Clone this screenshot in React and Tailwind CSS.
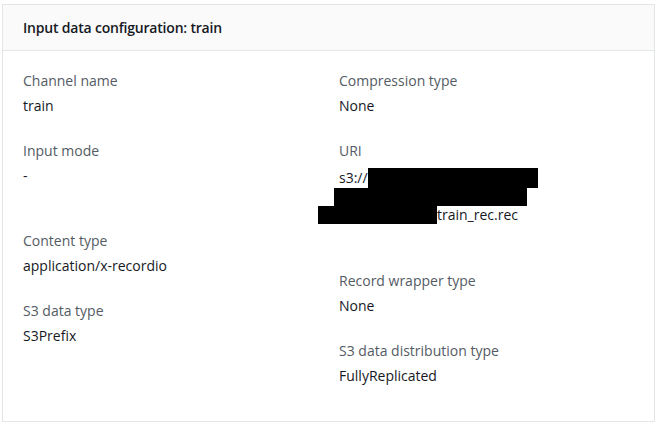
import React from "react";

function Field({ label, children, className = "" }) {
  return (
    <div className={className}>
      <div className="text-[14px] leading-[20px] text-[#545b64]">{label}</div>
      <div className="mt-[5px] text-[14px] leading-[20px] text-[#16191f]">{children}</div>
    </div>
  );
}

export default function App() {
  return (
    <div className="w-[655px] h-[424px] bg-white pt-[4px] pl-[2px]" style={{ fontFamily: "'Open Sans', 'Liberation Sans', sans-serif" }}>
      <div className="w-[653px] h-[418px] border border-[#e3e6e6] bg-white flex flex-col">
        <div className="h-[46px] shrink-0 bg-[#fafafa] border-b border-[#e3e6e6] flex items-center pl-[20px]">
          <h2 className="text-[14px] font-semibold tracking-[-0.2px] text-[#16191f]">Input data configuration: train</h2>
        </div>
        <div className="flex pt-[20px]">
          <div className="w-[336px] pl-[20px] flex flex-col">
            <Field label="Channel name">train</Field>
            <Field label="Input mode" className="mt-[25px]">-</Field>
            <Field label="Content type" className="mt-[45px]">application/x-recordio</Field>
            <Field label="S3 data type" className="mt-[25px]">S3Prefix</Field>
          </div>
          <div className="flex-1 flex flex-col">
            <Field label="Compression type">None</Field>
            <div className="mt-[25px]">
              <div className="text-[14px] leading-[20px] text-[#545b64]">URI</div>
              <div className="mt-[7px] text-[14px] leading-[18px] text-[#16191f]">
                <div className="flex items-center h-[20px]">
                  <span>s3://</span>
                  <span className="block w-[170px] h-[20px] bg-black"></span>
                </div>
                <div className="h-[18px] -ml-[5px] w-[193px] bg-black"></div>
                <div className="flex items-center h-[18px] -ml-[21px]">
                  <span className="block w-[119px] h-[18px] bg-black"></span>
                  <span>train_rec.rec</span>
                </div>
              </div>
            </div>
            <Field label="Record wrapper type" className="mt-[47px]">None</Field>
            <Field label="S3 data distribution type" className="mt-[25px]">FullyReplicated</Field>
          </div>
        </div>
      </div>
    </div>
  );
}
